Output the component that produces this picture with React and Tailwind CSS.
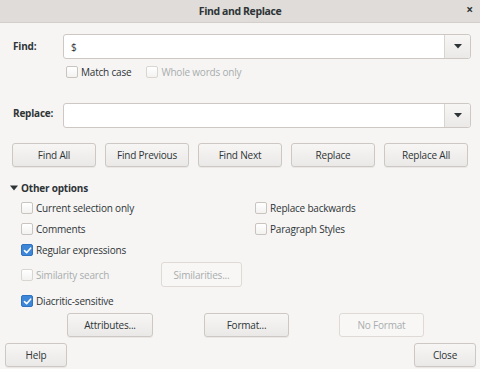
import React from "react";

function Check({ checked, disabled }) {
  if (checked) {
    return (
      <span className="flex h-[12px] w-[12px] shrink-0 items-center justify-center rounded-[2px] border border-[#2f73c0] bg-[#3d86d8]">
        <svg width="9" height="9" viewBox="0 0 9 9">
          <path d="M1.5 4.6 L3.6 6.7 L7.6 2.2" fill="none" stroke="#fff" strokeWidth="1.6" strokeLinecap="round" strokeLinejoin="round" />
        </svg>
      </span>
    );
  }
  return (
    <span
      className={
        "block h-[12px] w-[12px] shrink-0 rounded-[2px] border bg-gradient-to-b from-white to-[#f3f2f1] " +
        (disabled ? "border-[#d9d6d2]" : "border-[#c9c4bf]")
      }
    />
  );
}

function Opt({ label, checked, disabled, className = "" }) {
  return (
    <div className={"flex h-[12px] items-center gap-[3px] " + className}>
      <Check checked={checked} disabled={disabled} />
      <span className={disabled ? "text-[#a9adad]" : "text-[#2e3436]"}>{label}</span>
    </div>
  );
}

function Btn({ children, className = "", disabled }) {
  return (
    <div
      className={
        "flex h-[24px] items-center justify-center rounded-[3px] border " +
        (disabled
          ? "border-[#dedad6] bg-[#f8f7f6] text-[#a9adad] "
          : "border-[#cdc8c3] bg-gradient-to-b from-[#f7f6f5] to-[#ebe9e7] text-[#2e3436] shadow-[0_1px_0_rgba(0,0,0,0.05)] ") +
        className
      }
    >
      {children}
    </div>
  );
}

function Combo({ value }) {
  return (
    <div className="flex h-[25px] flex-1 rounded-[3px] border border-[#cdc8c3] bg-white">
      <div className="flex flex-1 items-center pl-[7px] text-[#2e3436]">{value}</div>
      <div className="flex w-[26px] items-center justify-center rounded-r-[3px] border-l border-[#d8d4d0] bg-gradient-to-b from-[#f7f6f5] to-[#ebe9e7]">
        <svg width="8" height="5" viewBox="0 0 8 5">
          <path d="M0 0 H8 L4 4.5 Z" fill="#2e3436" />
        </svg>
      </div>
    </div>
  );
}

export default function App() {
  return (
    <div
      className="flex h-[369px] w-[480px] flex-col overflow-hidden bg-[#f6f5f4] text-[10px] leading-[14px] tracking-[-0.2px] text-[#2e3436]"
      style={{ fontFamily: "'Open Sans', 'Noto Sans', sans-serif" }}
    >
      {/* Title bar */}
      <div className="relative flex h-[23px] shrink-0 items-center justify-center border-b border-[#d3d0cc] bg-[#dfdcd9]">
        <span className="text-[10.5px] font-bold tracking-[-0.4px] text-[#2e3436]">Find and Replace</span>
        <span className="absolute right-[7px] top-[4px] text-[12px] font-bold leading-none">×</span>
      </div>

      {/* Find */}
      <div className="mt-[11px] flex pl-[13px] pr-[9px]">
        <span className="w-[50px] pt-[5px] font-bold">Find:</span>
        <Combo value="$" />
      </div>
      <div className="mt-[7px] flex items-center pl-[66px]">
        <Opt label="Match case" />
        <Opt label="Whole words only" disabled className="ml-[15px]" />
      </div>

      {/* Replace */}
      <div className="mt-[25px] flex pl-[13px] pr-[9px]">
        <span className="w-[50px] pt-[3px] font-bold">Replace:</span>
        <Combo value="" />
      </div>

      {/* Action buttons */}
      <div className="mt-[15px] flex gap-[9px] pl-[12px]">
        <Btn className="w-[84px]">Find All</Btn>
        <Btn className="w-[84px]">Find Previous</Btn>
        <Btn className="w-[84px]">Find Next</Btn>
        <Btn className="w-[84px]">Replace</Btn>
        <Btn className="w-[84px]">Replace All</Btn>
      </div>

      {/* Other options */}
      <div className="mt-[14px] flex h-[14px] items-center pl-[10px] font-bold">
        <svg width="8" height="6" viewBox="0 0 8 6" className="mr-[3px]">
          <path d="M0 0.5 H8 L4 5.5 Z" fill="#2e3436" />
        </svg>
        Other options
      </div>

      <div className="flex flex-col pl-[21px]">
        <div className="mt-[7px] flex">
          <Opt label="Current selection only" className="w-[234px]" />
          <Opt label="Replace backwards" />
        </div>
        <div className="mt-[9px] flex">
          <Opt label="Comments" className="w-[234px]" />
          <Opt label="Paragraph Styles" />
        </div>
        <div className="mt-[9px] flex">
          <Opt label="Regular expressions" checked />
        </div>
        <div className="mt-[6px] flex h-[25px] items-center">
          <Opt label="Similarity search" disabled className="w-[140px]" />
          <Btn disabled className="h-[25px] w-[81px]">Similarities...</Btn>
        </div>
        <div className="mt-[8px] flex">
          <Opt label="Diacritic-sensitive" checked />
        </div>
      </div>

      <div className="mt-[6px] flex pl-[67px]">
        <Btn className="w-[86px]">Attributes...</Btn>
        <Btn className="ml-[51px] w-[85px]">Format...</Btn>
        <Btn disabled className="ml-[50px] w-[85px]">No Format</Btn>
      </div>

      <div className="mt-[6px] flex justify-between pl-[5px] pr-[4px]">
        <Btn className="w-[62px]">Help</Btn>
        <Btn className="w-[62px]">Close</Btn>
      </div>
    </div>
  );
}
